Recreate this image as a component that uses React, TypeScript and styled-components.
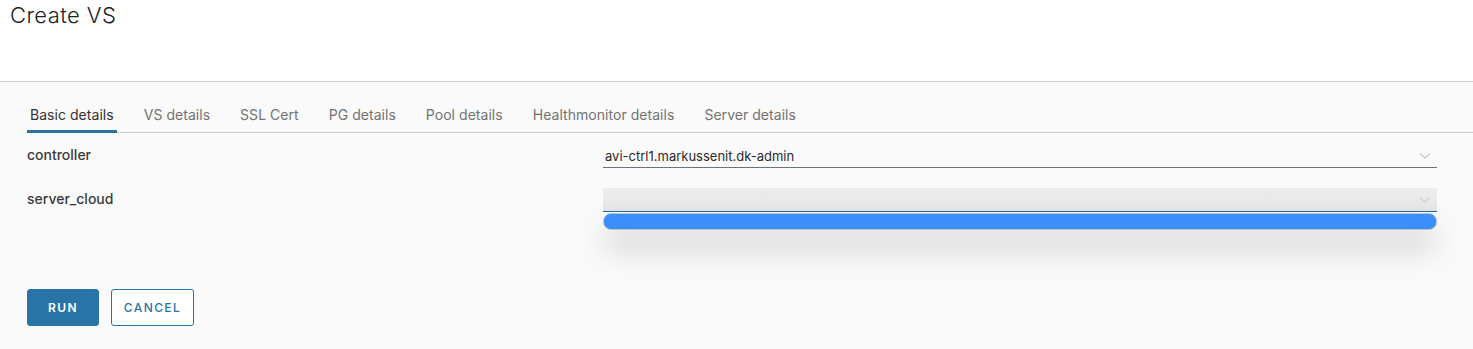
import React from 'react';
import styled, { createGlobalStyle } from 'styled-components';

const GlobalStyle = createGlobalStyle`
  html, body {
    margin: 0;
    padding: 0;
    background: #fafafa;
    font-family: Inter, "Open Sans", sans-serif;
    color: #333;
  }
`;

const tabs = [
  'Basic details',
  'VS details',
  'SSL Cert',
  'PG details',
  'Pool details',
  'Healthmonitor details',
  'Server details',
];

function Chevron({ faded }: { faded?: boolean }) {
  return (
    <ChevronIcon width="12" height="8" viewBox="0 0 12 8" $faded={faded}>
      <path d="M1 1.5 L6 6 L11 1.5" fill="none" stroke="currentColor" strokeWidth="1" />
    </ChevronIcon>
  );
}

export default function App() {
  return (
    <Page>
      <GlobalStyle />
      <Header>
        <Title>Create VS</Title>
      </Header>
      <Body>
        <TabBar>
          {tabs.map((t, i) => (
            <Tab key={t} $active={i === 0}>
              {t}
            </Tab>
          ))}
        </TabBar>
        <Form>
          <Row>
            <Label>controller</Label>
            <Select>
              <Value>avi-ctrl1.markussenit.dk-admin</Value>
              <Chevron />
            </Select>
          </Row>
          <Row>
            <Label>server_cloud</Label>
            <SelectWrap>
              <Select $open>
                <Value />
                <Chevron faded />
              </Select>
              <ListBox />
            </SelectWrap>
          </Row>
        </Form>
        <Actions>
          <PrimaryButton type="button">RUN</PrimaryButton>
          <OutlineButton type="button">CANCEL</OutlineButton>
        </Actions>
      </Body>
    </Page>
  );
}

const Page = styled.div`
  display: flex;
  flex-direction: column;
  width: 1473px;
  height: 349px;
  overflow: hidden;
  background: #fafafa;
`;

const Header = styled.header`
  height: 82px;
  background: #ffffff;
  border-bottom: 1px solid #cccccc;
  padding: 2px 10px;
  box-sizing: border-box;
`;

const Title = styled.h1`
  margin: 0;
  font-size: 22px;
  font-weight: 300;
  color: #222;
  letter-spacing: 0.4px;
`;

const Body = styled.div`
  display: flex;
  flex-direction: column;
  padding-left: 27px;
`;

const TabBar = styled.nav`
  display: flex;
  gap: 24px;
  margin-top: 19px;
  border-bottom: 1px solid #cccccc;
`;

const Tab = styled.div<{ $active?: boolean }>`
  padding: 5px 3px 7px;
  font-size: 14px;
  letter-spacing: 0.04px;
  color: ${({ $active }) => ($active ? '#333' : '#737373')};
  border-bottom: 3px solid ${({ $active }) => ($active ? '#2b73a6' : 'transparent')};
  margin-bottom: -1px;
`;

const Form = styled.div`
  display: flex;
  flex-direction: column;
  gap: 20px;
  padding-right: 36px;
  margin-top: 11px;
`;

const Row = styled.div`
  display: grid;
  grid-template-columns: 576px 1fr;
  align-items: center;
`;

const Label = styled.div`
  font-size: 14px;
  font-weight: 500;
  color: #3a3a3a;
  align-self: start;
  padding-top: 2px;
`;

const SelectWrap = styled.div`
  position: relative;
`;

const Select = styled.div<{ $open?: boolean }>`
  display: flex;
  align-items: center;
  justify-content: space-between;
  height: 23px;
  padding: 0 6px 0 2px;
  background: ${({ $open }) => ($open ? 'linear-gradient(#ececec, #e6e6e6)' : 'transparent')};
  border-bottom: 1px solid ${({ $open }) => ($open ? '#2d6a92' : '#6e737a')};
`;

const Value = styled.span`
  font-size: 13px;
  color: #2b2b2b;
`;

const ChevronIcon = styled.svg<{ $faded?: boolean }>`
  color: ${({ $faded }) => ($faded ? '#c4c4c4' : '#a8a8a8')};
`;

const ListBox = styled.div`
  position: absolute;
  left: 0;
  right: 0;
  top: 25px;
  height: 17px;
  border-radius: 8px;
  background: #3c8ffb;
  border: 1px solid #b9c4d0;
  box-sizing: border-box;
  box-shadow: 0 18px 32px rgba(0, 0, 0, 0.2);
`;

const Actions = styled.div`
  display: flex;
  gap: 12px;
  margin-top: 77px;
`;

const ButtonBase = styled.button`
  height: 37px;
  padding: 0;
  border-radius: 3px;
  font-family: Inter, "Open Sans", sans-serif;
  font-size: 12px;
  font-weight: 600;
  letter-spacing: 1.4px;
  cursor: pointer;
`;

const PrimaryButton = styled(ButtonBase)`
  width: 72px;
  background: #2874a6;
  color: #ffffff;
  border: 1px solid #2874a6;
`;

const OutlineButton = styled(ButtonBase)`
  width: 83px;
  background: #ffffff;
  color: #2874a6;
  border: 1px solid #2874a6;
  font-weight: 500;
`;
